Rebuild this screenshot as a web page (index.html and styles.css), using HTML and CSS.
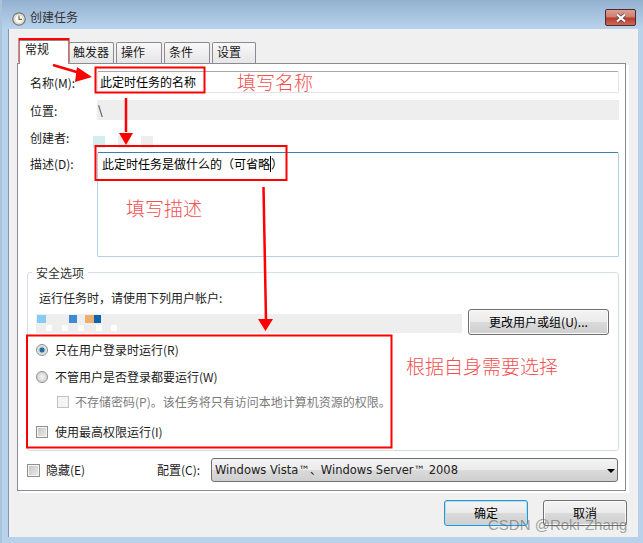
FILE: index.html
```html
<!DOCTYPE html>
<html lang="zh-CN">
<head>
<meta charset="utf-8">
<title>创建任务</title>
<link rel="stylesheet" href="styles.css">
</head>
<body>
<div class="window">
  <header class="titlebar">
    <svg class="clock" viewBox="0 0 14 14" width="14" height="14"><circle cx="7" cy="7" r="6.2" fill="#e6e4da" stroke="#77777a" stroke-width="1.2"/><circle cx="7" cy="7" r="4.3" fill="#fbfbf4" stroke="#c3c2b4" stroke-width=".6"/><path d="M7 3.6V7.4H10" fill="none" stroke="#6a6a50" stroke-width="1.1"/></svg>
    <span class="title">创建任务</span>
    <button class="close"><svg viewBox="0 0 14 10" width="14" height="10"><path d="M3 1.500 11 8.500M11 1.500 3 8.500" stroke="#5a3a3a" stroke-width="3.600"/><path d="M3 1.500 11 8.500M11 1.500 3 8.500" stroke="#fff" stroke-width="2.200"/></svg></button>
  </header>
  <main class="client">
    <nav class="tabs">
      <span class="tab active">常规</span>
      <span class="tab t2">触发器</span>
      <span class="tab">操作</span>
      <span class="tab">条件</span>
      <span class="tab t5">设置</span>
    </nav>
    <section class="panel">
      <div class="form">
        <label class="lbl name-l">名称(M):</label>
        <div class="input">此定时任务的名称</div>
        <label class="lbl loc-l">位置:</label>
        <div class="readonly">\</div>
        <label class="lbl creator">创建者:</label>
        <div class="masked">
          <i class="chip c1"></i><i class="chip c2"></i><i class="chip c3"></i>
        </div>
        <label class="lbl desc-l">描述(D):</label>
        <div class="textarea">此定时任务是做什么的（可省略<i class="caret"></i>）</div>
      </div>
      <fieldset class="group">
        <legend>安全选项</legend>
        <p class="hint">运行任务时，请使用下列用户帐户:</p>
        <div class="user-row">
          <div class="user-bar">
            <i class="u u1"></i><i class="u u2"></i><i class="u u3"></i><i class="u u4"></i><i class="flecks"></i>
          </div>
          <button class="btn change">更改用户或组(U)...</button>
        </div>
        <div class="opt o1"><i class="radio on"></i><span>只在用户登录时运行(R)</span></div>
        <div class="opt o2"><i class="radio"></i><span>不管用户是否登录都要运行(W)</span></div>
        <div class="opt o3 disabled"><i class="check dim"></i><span>不存储密码(P)。该任务将只有访问本地计算机资源的权限。</span></div>
        <div class="opt o4"><i class="check"></i><span>使用最高权限运行(I)</span></div>
      </fieldset>
      <div class="bottom">
        <i class="check big"></i><span class="hidden-l">隐藏(E)</span>
        <span class="cfg-l">配置(C):</span>
        <div class="select"><span>Windows Vista™、Windows Server™ 2008</span><i class="arrow"></i></div>
      </div>
    </section>
    <footer class="actions">
      <button class="btn action default">确定</button>
      <button class="btn action">取消</button>
    </footer>
  </main>

  <svg class="marks" viewBox="0 0 643 543" width="643" height="543">
    <g fill="none" stroke="#f00" stroke-width="2">
      <rect x="19.500" y="39" width="49" height="22.500"/>
      <rect x="95.500" y="67.500" width="109" height="25"/>
      <rect x="95.500" y="146" width="191" height="34"/>
      <rect x="27" y="335.500" width="364.500" height="112"/>
    </g>
    <g stroke="#f00" stroke-width="2.500" fill="#f00">
      <path d="M53 65 80 73"/>
      <path d="M92 77 77 67 75 82Z" stroke="none"/>
      <path d="M126 98V132"/>
      <path d="M126 145 119 133H133Z" stroke="none"/>
      <path d="M263.500 187 266 320"/>
      <path d="M265.500 331 258 319H273Z" stroke="none"/>
    </g>
  </svg>
  <span class="note n1">填写名称</span>
  <span class="note n2">填写描述</span>
  <span class="note n3">根据自身需要选择</span>
  <span class="watermark">CSDN @Roki-Zhang</span>
</div>
</body>
</html>
```
FILE: styles.css
```css
* { box-sizing: border-box; }
html, body { margin: 0; padding: 0; }
body {
  background: #b8d2ec;
  font: 12px/16px "Noto Sans CJK SC", "Liberation Sans", sans-serif;
  color: #1a1a1a;
}
i { display: block; font-style: normal; }
button { font: inherit; color: inherit; padding: 0; margin: 0; }

.window {
  position: relative;
  width: 643px;
  height: 543px;
  overflow: hidden;
  background: #b8d2ec;
  border-left: 2px solid #a9c4df;
}
.titlebar {
  height: 29px;
  display: flex;
  align-items: center;
  margin-left: -2px;
  padding: 4px 0 0 12px;
  background: linear-gradient(#93b1cf, #b9d3ed);
}
.clock { flex: none; margin-top: 4px; }
.title { margin-left: 4px; color: #333; }
.close {
  margin-left: auto;
  margin-right: 7px;
  margin-top: 2px;
  width: 31px;
  height: 17px;
  display: flex;
  align-items: center;
  justify-content: center;
  border: 1px solid #4d2a30;
  border-radius: 2px;
  background: linear-gradient(#dc9d92 0, #cf7e70 48%, #b53a28 52%, #cc6a58 100%);
}

.client {
  width: 630px;
  height: 508px;
  margin-left: 6px;
  padding: 12px 0 0 8px;
  background: #f0f0f0;
  border-left: 1px solid #7f98b0;
}
.tabs {
  display: flex;
  align-items: flex-end;
  height: 22px;
  padding-left: 2px;
}
.tab {
  height: 21px;
  width: 46px;
  margin-left: 2px;
  padding: 1px 0 0 4px;
  border: 1px solid #8a8a92;
  border-bottom: 0;
  background: linear-gradient(#f8f8f8, #e6e6e6);
  border-radius: 2px 2px 0 0;
}
.tab.active {
  width: 50px;
  height: 24px;
  margin: 0 0 -1px;
  padding: 0 0 0 5px;
  background: #fff;
  position: relative;
  z-index: 1;
}
.tab.t2 { width: 45px; margin-left: 0; border-left: 0; }
.tab.t5 { width: 44px; }

.panel {
  position: relative;
  width: 609px;
  height: 428px;
  padding: 7px 7px 0 9px;
  background: #fff;
  border: 1px solid #8a8a92;
  box-shadow: 3px 2px 0 #fff;
}
.form {
  display: grid;
  grid-template-columns: 70px 522px;
  align-items: center;
}
.lbl { padding-left: 3px; }
.name-l { padding-top: 2px; }
.loc-l { margin-top: 9px; }
.input {
  height: 22px;
  padding: 2px 0 0 2px;
  border: 1px solid #e4e4e4;
  border-top-color: #a8a8a8;
  border-radius: 2px;
  color: #000;
}
.readonly {
  height: 20px;
  margin-top: 7px;
  padding-left: 1px;
  background: #eeeeee;
  line-height: 20px;
}
.creator { margin-top: 3px; }
.masked {
  position: relative;
  height: 32px;
}
.chip { position: absolute; top: 16px; width: 12px; height: 12px; }
.c1 { left: -4px; background: #d3eeee; }
.c2 { left: 21px; background: #eeeeee; }
.c3 { left: 44px; background: #eeeeee; }
.desc-l { align-self: start; padding-top: 4px; }
.textarea {
  height: 105px;
  padding: 3px 0 0 4px;
  border: 1px solid #b5cfe7;
  border-top-color: #3d7fb0;
  border-radius: 2px;
  color: #000;
}
.caret {
  display: inline-block;
  width: 1px;
  height: 16px;
  vertical-align: -3px;
  background: #000;
}

.group {
  display: block;
  position: relative;
  width: 592px;
  height: 179px;
  min-width: 0;
  margin: 15px 0 0;
  padding: 0 0 0 8px;
  border: 1px solid #d5dfe8;
  border-radius: 3px;
}
.group legend {
  position: absolute;
  top: -8px;
  left: 4px;
  padding: 0 4px;
  background: #fff;
  color: #333;
}
.hint { margin: 17px 0 0 3px; color: #222; }
.user-row { display: flex; align-items: flex-start; margin-top: 3px; }
.user-bar {
  position: relative;
  width: 426px;
  height: 19px;
  margin-top: 5px;
  background: #eeeeee;
}
.u { position: absolute; top: 1px; height: 8px; }
.u1 { left: 1px; width: 9px; background: #86ccf2; }
.u2 { left: 33px; width: 8px; background: #3f8ad2; }
.u3 { left: 49px; width: 9px; background: #efae6c; }
.u4 { left: 58px; width: 7px; background: #0a66ae; }
.flecks {
  position: absolute;
  left: 10px;
  top: 11px;
  width: 6px;
  height: 6px;
  background: #fff;
  box-shadow: 16px 0 #fff, 32px 0 #fff, 50px 0 #fff, 65px 0 #fff;
}
.btn {
  border: 1px solid #707070;
  border-radius: 3px;
  background: linear-gradient(#f4f4f4 0, #ebebeb 48%, #dadada 52%, #cfcfcf 100%);
  box-shadow: inset 0 0 0 1px #fbfbfb;
  color: #000;
}
.change { width: 141px; height: 26px; margin-left: 6px; }

.opt { display: flex; align-items: center; height: 20px; }
.o1 { margin-top: 5px; }
.o2 { margin-top: 7px; }
.o3 { margin-top: 5px; padding-left: 21px; }
.o4 { margin-top: 10px; }
.opt span { margin-left: 7px; }
.o3 span { margin-left: 6px; }
.disabled { color: #7a7a7a; }
.radio {
  flex: none;
  width: 12px;
  height: 12px;
  border: 1px solid #8e8f8f;
  border-radius: 50%;
  background: radial-gradient(circle, #f4f4f4, #c8c8c8);
}
.radio.on {
  background: radial-gradient(circle, #2f6d94 0, #2f6d94 30%, #a9cfe0 40%, #e8e8e8 60%, #d0d0d0 100%);
}
.check {
  flex: none;
  width: 12px;
  height: 12px;
  border: 1px solid #8e8f8f;
  background: linear-gradient(135deg, #c4c4c4, #ececec);
  box-shadow: inset 0 0 0 1px #f4f4f4;
}
.check.big { width: 13px; height: 13px; }
.check.dim {
  border-color: #c2c2c2;
  background: #f4f4f4;
  box-shadow: none;
}

.bottom {
  display: flex;
  align-items: center;
  height: 24px;
  margin-top: 7px;
}
.hidden-l { margin-left: 6px; width: 111px; }
.cfg-l { width: 54px; }
.select {
  position: relative;
  flex: none;
  width: 407px;
  height: 24px;
  padding-left: 3px;
  display: flex;
  align-items: center;
  border: 1px solid #707070;
  border-radius: 3px;
  background: linear-gradient(#f4f4f4 0, #ebebeb 48%, #dadada 52%, #cfcfcf 100%);
  font-family: "DejaVu Sans", sans-serif;
  font-size: 11.500px;
  color: #222;
}
.arrow {
  position: absolute;
  right: 2px;
  top: 10px;
  width: 0;
  height: 0;
  border: 4px solid transparent;
  border-top: 4px solid #000;
  border-bottom: 0;
}

.actions {
  display: flex;
  justify-content: flex-end;
  gap: 15px;
  width: 610px;
  margin-top: 9px;
}
.action { width: 84px; height: 26px; }
.default {
  border-color: #3c8fc4;
  box-shadow: inset 0 0 0 1px #a8e0f6;
}

.marks {
  position: absolute;
  left: -2px;
  top: 0;
  pointer-events: none;
}
.note {
  position: absolute;
  font-size: 19px;
  line-height: 22px;
  font-weight: 300;
  color: #f25050;
  white-space: nowrap;
}
.n1 { left: 235px; top: 71px; }
.n2 { left: 124px; top: 197px; }
.n3 { left: 404px; top: 355px; }
.watermark {
  position: absolute;
  left: 486px;
  top: 515px;
  font: 15px/20px "Liberation Sans", sans-serif;
  color: rgba(90, 90, 90, .55);
  white-space: nowrap;
}
```
